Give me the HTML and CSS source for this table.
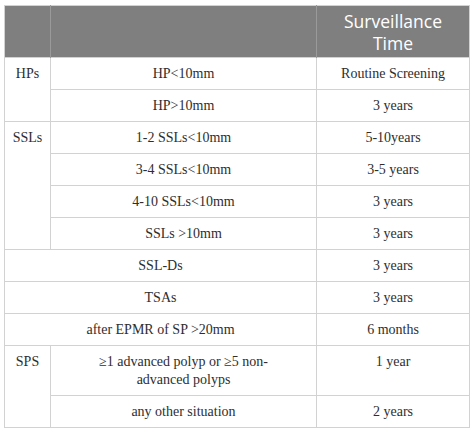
FILE: index.html
```html
<!DOCTYPE html>
<html>
<head>
<meta charset="utf-8">
<link rel="stylesheet" href="styles.css">
</head>
<body>
<table class="tbl">
  <colgroup>
    <col class="c1"><col class="c2"><col class="c3">
  </colgroup>
  <thead>
    <tr><th></th><th></th><th>Surveillance<br>Time</th></tr>
  </thead>
  <tbody>
    <tr><td class="grp" rowspan="2">HPs</td><td>HP&lt;10mm</td><td>Routine Screening</td></tr>
    <tr><td>HP&gt;10mm</td><td>3 years</td></tr>
    <tr><td class="grp" rowspan="4">SSLs</td><td>1-2 SSLs&lt;10mm</td><td>5-10years</td></tr>
    <tr><td>3-4 SSLs&lt;10mm</td><td>3-5 years</td></tr>
    <tr><td>4-10 SSLs&lt;10mm</td><td>3 years</td></tr>
    <tr><td>SSLs &gt;10mm</td><td>3 years</td></tr>
    <tr><td colspan="2">SSL-Ds</td><td>3 years</td></tr>
    <tr><td colspan="2">TSAs</td><td>3 years</td></tr>
    <tr><td colspan="2">after EPMR of SP &gt;20mm</td><td>6 months</td></tr>
    <tr><td class="grp" rowspan="2">SPS</td><td>≥1 advanced polyp or ≥5 non-<br>advanced polyps</td><td>1 year</td></tr>
    <tr><td>any other situation</td><td>2 years</td></tr>
  </tbody>
</table>
</body>
</html>
```

FILE: styles.css
```css
html, body {
  margin: 0;
  padding: 0;
  background: #ffffff;
}
body {
  padding: 5px 0 0 4px;
}
.tbl {
  border-collapse: collapse;
  width: 465px;
  table-layout: fixed;
  font-family: "Liberation Serif", Tinos, "Times New Roman", serif;
  font-size: 14px;
  color: #2e2e2e;
  border: 1.5px solid #d2d2d2;
}
.c1 { width: 46px; }
.c2 { width: 266px; }
.c3 { width: 153px; }
.tbl th {
  background: #7f7f7f;
  color: #ffffff;
  font-family: "Open Sans", "Liberation Sans", sans-serif;
  font-weight: normal;
  font-size: 17.5px;
  line-height: 22px;
  padding: 4px 4px 3px;
  border-left: 1px solid #9a9a9a;
  text-align: center;
}
.tbl th:first-child { border-left: none; }
.tbl td {
  border: 1px solid #d2d2d2;
  text-align: center;
  line-height: 18px;
  padding: 7px 4px 6px;
  vertical-align: top;
}
```
